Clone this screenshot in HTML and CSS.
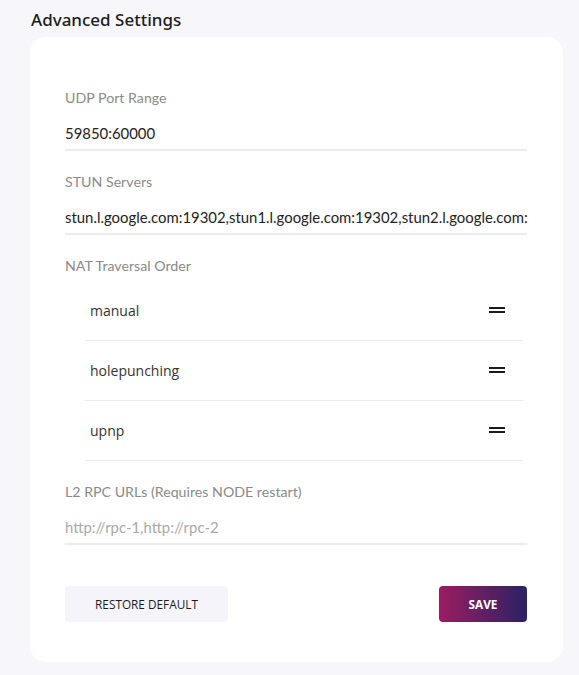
FILE: index.html
```html
<!DOCTYPE html>
<html>
<head>
<meta charset="utf-8">
<link rel="stylesheet" href="styles.css">
</head>
<body>
<div class="page">
  <h2 class="title">Advanced Settings</h2>
  <div class="card">
    <div class="field">
      <div class="label">UDP Port Range</div>
      <div class="input">59850:60000</div>
    </div>
    <div class="field">
      <div class="label">STUN Servers</div>
      <div class="input">stun.l.google.com:19302,stun1.l.google.com:19302,stun2.l.google.com:</div>
    </div>
    <div class="field">
      <div class="label">NAT Traversal Order</div>
      <ul class="order">
        <li class="row"><span>manual</span><span class="handle"></span></li>
        <li class="row"><span>holepunching</span><span class="handle"></span></li>
        <li class="row"><span>upnp</span><span class="handle"></span></li>
      </ul>
    </div>
    <div class="field">
      <div class="label">L2 RPC URLs (Requires NODE restart)</div>
      <div class="input placeholder">http://rpc-1,http://rpc-2</div>
    </div>
    <div class="actions">
      <button class="btn btn-light">RESTORE DEFAULT</button>
      <button class="btn btn-save">SAVE</button>
    </div>
  </div>
</div>
</body>
</html>
```
FILE: styles.css
```css
html, body {
  margin: 0;
  padding: 0;
  background: #f7f6fb;
}
.page {
  padding: 8px 16px 0 30px;
}
.title {
  margin: 0 0 5px 1px;
  font-family: "Noto Sans", "Open Sans", sans-serif;
  font-weight: 500;
  font-size: 17px;
  line-height: 24px;
  color: #1c1c1c;
}
.card {
  background: #ffffff;
  border-radius: 16px;
  padding: 51px 36px 40px 35px;
  box-sizing: border-box;
  width: 533px;
  height: 625px;
}
.field {
  margin-bottom: 21px;
}
.label {
  font-family: Lato, sans-serif;
  font-size: 14.2px;
  line-height: 20px;
  color: #8a8a8a;
}
.input {
  margin-top: 7px;
  height: 36px;
  box-sizing: border-box;
  padding-top: 4px;
  line-height: 28px;
  font-family: Lato, sans-serif;
  font-size: 14.9px;
  color: #222;
  border-bottom: 2px solid #ececec;
  white-space: nowrap;
  overflow: hidden;
}
.input.placeholder {
  color: #a9a9a9;
}
.order {
  list-style: none;
  margin: 5px 4px 0 20px;
  padding: 0;
}
.row {
  display: flex;
  align-items: center;
  justify-content: space-between;
  height: 59px;
  border-bottom: 1px solid #ececec;
  padding: 0 18px 0 5px;
  font-family: "Open Sans", sans-serif;
  font-size: 14px;
  color: #333;
}
.handle {
  width: 16px;
  height: 2px;
  border-top: 2px solid #1a1a1a;
  border-bottom: 2px solid #1a1a1a;
  margin-top: -2px;
}
.actions {
  display: flex;
  justify-content: space-between;
  margin-top: 41px;
}
.btn {
  height: 36px;
  border: none;
  border-radius: 4px;
  font-family: "Open Sans", sans-serif;
  font-size: 11.8px;
  padding: 0;
}
.btn-light {
  width: 163px;
  background: #f5f4fa;
  color: #1a1a1a;
}
.btn-save {
  width: 88px;
  background: linear-gradient(to right, #9c1c62, #2a2264);
  color: #fff;
  font-weight: 700;
}
```
